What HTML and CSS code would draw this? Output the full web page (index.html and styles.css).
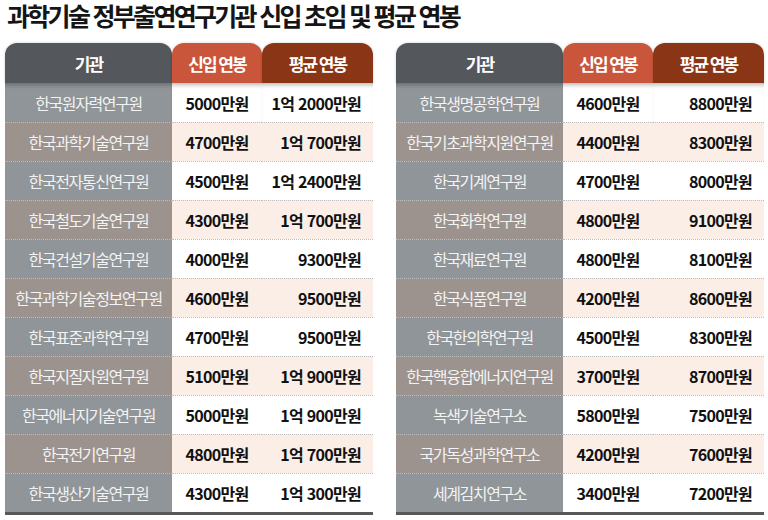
FILE: index.html
```html
<!DOCTYPE html>
<html lang="ko">
<head>
<meta charset="utf-8">
<title>과학기술 정부출연연구기관 신입 초임 및 평균 연봉</title>
<link rel="stylesheet" href="styles.css">
</head>
<body>
<div class="page">
  <h1 class="title">과학기술 정부출연연구기관 신입 초임 및 평균 연봉</h1>
  <div class="tables">
    <div class="tbl">
      <div class="head">
        <div class="hc h-name">기관</div>
        <div class="hc h-new">신입 연봉</div>
        <div class="hc h-avg">평균 연봉</div>
      </div>
      <div class="row"><div class="c name">한국원자력연구원</div><div class="c new">5000만원</div><div class="c avg">1억 2000만원</div></div>
      <div class="row"><div class="c name">한국과학기술연구원</div><div class="c new">4700만원</div><div class="c avg">1억 700만원</div></div>
      <div class="row"><div class="c name">한국전자통신연구원</div><div class="c new">4500만원</div><div class="c avg">1억 2400만원</div></div>
      <div class="row"><div class="c name">한국철도기술연구원</div><div class="c new">4300만원</div><div class="c avg">1억 700만원</div></div>
      <div class="row"><div class="c name">한국건설기술연구원</div><div class="c new">4000만원</div><div class="c avg">9300만원</div></div>
      <div class="row"><div class="c name">한국과학기술정보연구원</div><div class="c new">4600만원</div><div class="c avg">9500만원</div></div>
      <div class="row"><div class="c name">한국표준과학연구원</div><div class="c new">4700만원</div><div class="c avg">9500만원</div></div>
      <div class="row"><div class="c name">한국지질자원연구원</div><div class="c new">5100만원</div><div class="c avg">1억 900만원</div></div>
      <div class="row"><div class="c name">한국에너지기술연구원</div><div class="c new">5000만원</div><div class="c avg">1억 900만원</div></div>
      <div class="row"><div class="c name">한국전기연구원</div><div class="c new">4800만원</div><div class="c avg">1억 700만원</div></div>
      <div class="row"><div class="c name">한국생산기술연구원</div><div class="c new">4300만원</div><div class="c avg">1억 300만원</div></div>
    </div>
    <div class="tbl">
      <div class="head">
        <div class="hc h-name">기관</div>
        <div class="hc h-new">신입 연봉</div>
        <div class="hc h-avg">평균 연봉</div>
      </div>
      <div class="row"><div class="c name">한국생명공학연구원</div><div class="c new">4600만원</div><div class="c avg">8800만원</div></div>
      <div class="row"><div class="c name">한국기초과학지원연구원</div><div class="c new">4400만원</div><div class="c avg">8300만원</div></div>
      <div class="row"><div class="c name">한국기계연구원</div><div class="c new">4700만원</div><div class="c avg">8000만원</div></div>
      <div class="row"><div class="c name">한국화학연구원</div><div class="c new">4800만원</div><div class="c avg">9100만원</div></div>
      <div class="row"><div class="c name">한국재료연구원</div><div class="c new">4800만원</div><div class="c avg">8100만원</div></div>
      <div class="row"><div class="c name">한국식품연구원</div><div class="c new">4200만원</div><div class="c avg">8600만원</div></div>
      <div class="row"><div class="c name">한국한의학연구원</div><div class="c new">4500만원</div><div class="c avg">8300만원</div></div>
      <div class="row"><div class="c name">한국핵융합에너지연구원</div><div class="c new">3700만원</div><div class="c avg">8700만원</div></div>
      <div class="row"><div class="c name">녹색기술연구소</div><div class="c new">5800만원</div><div class="c avg">7500만원</div></div>
      <div class="row"><div class="c name">국가독성과학연구소</div><div class="c new">4200만원</div><div class="c avg">7600만원</div></div>
      <div class="row"><div class="c name">세계김치연구소</div><div class="c new">3400만원</div><div class="c avg">7200만원</div></div>
    </div>
  </div>
</div>
</body>
</html>
```

FILE: styles.css
```css
* { box-sizing: border-box; }
html, body { margin: 0; padding: 0; background: #ffffff; }
body {
  font-family: "Noto Sans CJK KR", "Noto Sans", sans-serif;
  color: #111111;
}
.page {
  width: 768px;
  height: 520px;
  padding: 0 0 0 5px;
  overflow: hidden;
}
.title {
  margin: 0 0 0 2px;
  font-size: 25px;
  line-height: 31px;
  font-weight: 700;
  letter-spacing: -2.7px;
  color: #151515;
  white-space: nowrap;
}
.tables {
  display: flex;
  gap: 23px;
  margin-top: 12px;
}
.tbl {
  width: 368px;
  border-bottom: 3px solid #56585a;
}
.head, .row {
  display: grid;
  grid-template-columns: 167px 90px 111px;
}
.head { height: 40px; }
.hc {
  border-radius: 12px 12px 0 0;
  color: #ffffff;
  font-size: 17px;
  font-weight: 700;
  letter-spacing: -2px;
  display: flex;
  align-items: center;
  justify-content: center;
  box-shadow: 0 0 3px rgba(0, 0, 0, 0.18);
}
.h-name { background: #54585c; }
.h-new { background: #c9553a; }
.h-avg { background: #8a3616; }
.row { height: 39px; }
.c {
  display: flex;
  align-items: center;
}
.row + .row > .c { border-top: 1px dotted #bdbdbd; }
.row:nth-child(2) > .c { box-shadow: inset 0 5px 4px -3px rgba(0, 0, 0, 0.28); }
.name {
  justify-content: center;
  background: #8f9598;
  color: #f3f3f3;
  font-size: 16px;
  letter-spacing: -1.4px;
}
.row:nth-child(odd) > .name { background: #9c938e; }
.new, .avg {
  font-size: 16px;
  font-weight: 700;
  letter-spacing: -0.7px;
  color: #111111;
  background: #ffffff;
}
.row:nth-child(odd) > .new, .row:nth-child(odd) > .avg { background: #fbeee7; }
.new { justify-content: center; }
.avg { justify-content: flex-end; padding-right: 12px; }
```
